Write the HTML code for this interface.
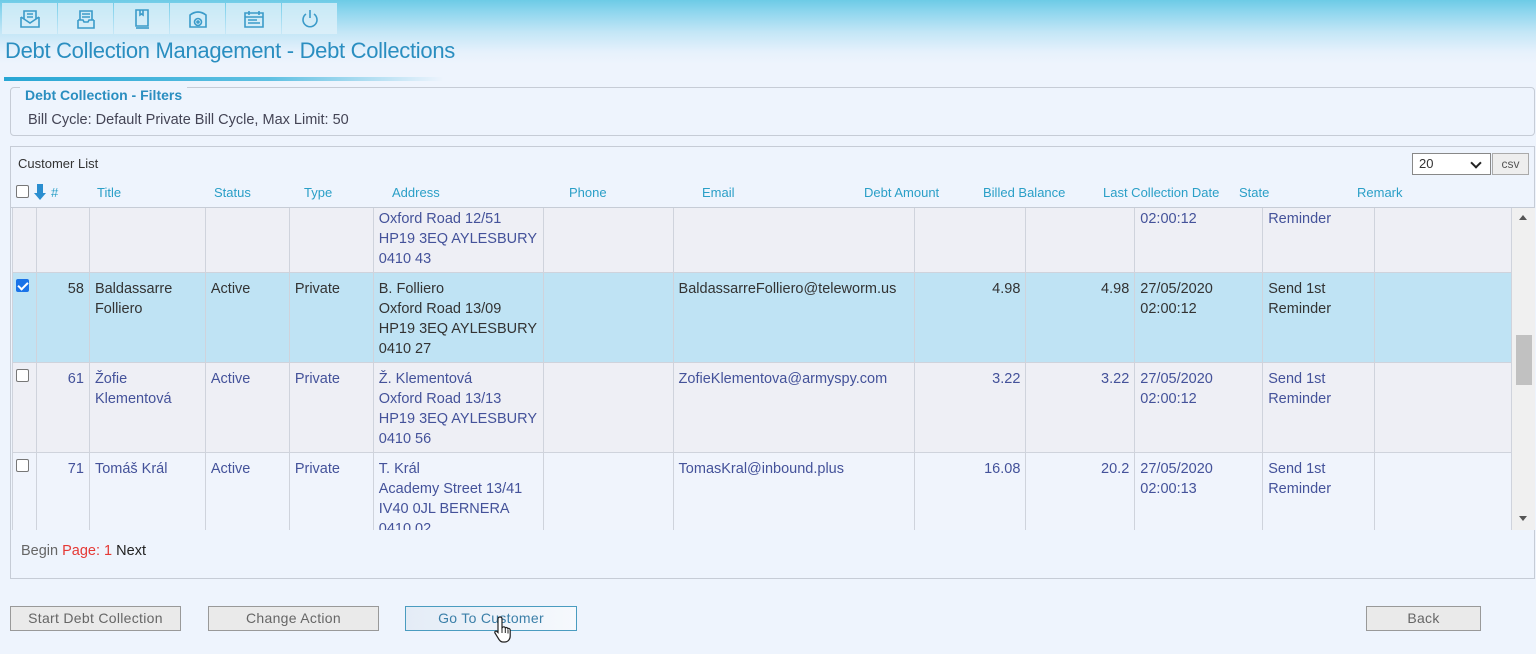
<!DOCTYPE html>
<html><head><meta charset="utf-8"><style>
*{box-sizing:border-box;margin:0;padding:0}
body{width:1536px;height:654px;overflow:hidden;background:#eef4fd;font-family:"Liberation Sans",sans-serif;position:relative;color:#333}
.top{position:absolute;left:0;top:0;width:1536px;height:66px;background:linear-gradient(#6dcbe6 0px,#8fd6ee 12px,#c3e6f6 32px,#e6f1fc 52px,#eef4fd 64px)}
.tile{position:absolute;top:3px;width:55px;height:31px;background:rgba(225,242,250,.75)}
.tile svg{position:absolute;left:17px;top:5px}
h1{position:absolute;left:5px;top:38px;font-size:22px;font-weight:normal;color:#2a8ec0;letter-spacing:-.3px}
.uline{position:absolute;left:4px;top:77px;width:440px;height:4px;background:linear-gradient(90deg,#28a6d4,#5ec0e2 60%,rgba(238,244,253,0))}
fieldset{position:absolute;left:10px;top:87px;width:1525px;height:49px;border:1px solid #c6ccd6;border-radius:4px}
.lg{position:absolute;left:20px;top:87px;background:#eef4fd;padding:0 5px;font-size:14px;font-weight:bold;color:#2a8ec0}
.bc{position:absolute;left:28px;top:112px;font-size:14.5px;color:#445}
.list{position:absolute;left:10px;top:146px;width:1525px;height:433px;border:1px solid #c6ccd6}
.cl{position:absolute;left:18px;top:156px;font-size:13px;color:#333}
.sel{position:absolute;left:1412px;top:153px;width:79px;height:22px;border:1px solid #888;background:#fff;font-size:13px;padding:2px 6px}
.sel:after{content:"";position:absolute;right:10px;top:5px;width:6px;height:6px;border-right:2px solid #222;border-bottom:2px solid #222;transform:rotate(45deg)}
.csv{position:absolute;left:1492px;top:153px;width:37px;height:22px;border:1px solid #aaa;background:#eee;font-size:12px;color:#555;text-align:center;line-height:20px}
.hd{position:absolute;top:185px;font-size:13px;color:#2a9fc7}
.hline{position:absolute;left:11px;top:207px;width:1523px;height:1px;background:#c6ccd6}
.body{position:absolute;left:12px;top:208px;width:1500px;height:322px;overflow:hidden}
table{border-collapse:collapse;table-layout:fixed;margin-top:-26px;font-size:14.5px}
td{border:1px solid #cfd3dc;vertical-align:top;padding:6px 5px 0 5px;line-height:20px;height:90px;color:#44529a;overflow:hidden;white-space:nowrap}
tr.g td{background:#eeeff5}
tr.l td{background:#f0f4fc}
tr.s td{background:#bfe3f4;color:#333}
td.r{text-align:right}
.cb{width:13px;height:13px;border:1px solid #777;border-radius:2px;background:#fff;margin:0 0 0 -1px}
.cb.on{background:#1a73e8;border-color:#1a73e8;position:relative}
.cb.on:after{content:"";position:absolute;left:3px;top:0px;width:4px;height:8px;border-right:2px solid #fff;border-bottom:2px solid #fff;transform:rotate(45deg)}
.sb{position:absolute;left:1512px;top:208px;width:23px;height:322px;background:#f0f0f0}
.thumb{position:absolute;left:1516px;top:335px;width:16px;height:50px;background:#c1c1c1}
.pg{position:absolute;left:21px;top:543px;font-size:14.5px;color:#666}
.btn{position:absolute;top:606px;height:25px;border:1px solid #999;background:#eaeaea;font-size:14px;color:#666;text-align:center;line-height:23px;letter-spacing:.3px}
</style></head><body>
<div class="top"></div>
<div class="tile" style="left:2px"><svg width="22" height="22" viewBox="0 0 22 22" fill="none" stroke="#3b9bc9" stroke-width="1.6"><path d="M2 9v10h18V9"/><path d="M2 9l9 6 9-6"/><path d="M5 11V3h12v8"/><path d="M8 6h6M8 9h6"/></svg></div>
<div class="tile" style="left:58px"><svg width="22" height="22" viewBox="0 0 22 22" fill="none" stroke="#3b9bc9" stroke-width="1.6"><path d="M3 12v8h16v-8"/><path d="M3 12h5l1 2h4l1-2h5"/><path d="M5 12V3h12v9"/><path d="M7 6h8M7 9h8"/></svg></div>
<div class="tile" style="left:114px"><svg width="22" height="22" viewBox="0 0 22 22" fill="none" stroke="#3b9bc9" stroke-width="1.6"><path d="M5 2h12v16H5z"/><path d="M5 20h13"/><path d="M9 2v5l1.5-1 1.5 1V2"/></svg></div>
<div class="tile" style="left:170px"><svg width="22" height="22" viewBox="0 0 22 22" fill="none" stroke="#3b9bc9" stroke-width="1.6"><path d="M3 7q8-6 16 0v12H3z"/><circle cx="11" cy="14" r="3.5"/><circle cx="11" cy="14" r="1"/></svg></div>
<div class="tile" style="left:226px"><svg width="22" height="22" viewBox="0 0 22 22" fill="none" stroke="#3b9bc9" stroke-width="1.6"><path d="M2 5h18v14H2z"/><path d="M2 9h18"/><path d="M6 3v4M16 3v4"/><path d="M5 12h9M5 15h12"/></svg></div>
<div class="tile" style="left:282px"><svg width="22" height="22" viewBox="0 0 22 22" fill="none" stroke="#3b9bc9" stroke-width="1.6"><path d="M7 6a7 7 0 1 0 8 0"/><path d="M11 2v8"/></svg></div>
<h1>Debt Collection Management - Debt Collections</h1>
<div class="uline"></div>
<fieldset></fieldset>
<div class="lg">Debt Collection - Filters</div>
<div class="bc">Bill Cycle: Default Private Bill Cycle, Max Limit: 50</div>
<div class="list"></div>
<div class="cl">Customer List</div>
<div class="sel">20</div><div class="csv">csv</div>
<div class="cb" style="position:absolute;left:17px;top:185px"></div>
<svg style="position:absolute;left:33px;top:183px" width="14" height="18" viewBox="0 0 14 18"><path d="M4 1h6v9h3l-6 7-6-7h3z" fill="#2a8ed0"/></svg>
<div class="hd" style="left:51px">#</div>
<div class="hd" style="left:97px">Title</div>
<div class="hd" style="left:214px">Status</div>
<div class="hd" style="left:304px">Type</div>
<div class="hd" style="left:392px">Address</div>
<div class="hd" style="left:569px">Phone</div>
<div class="hd" style="left:702px">Email</div>
<div class="hd" style="left:864px">Debt Amount</div>
<div class="hd" style="left:983px">Billed Balance</div>
<div class="hd" style="left:1103px">Last Collection Date</div>
<div class="hd" style="left:1239px">State</div>
<div class="hd" style="left:1357px">Remark</div>
<div class="hline"></div>
<div class="body"><table>
<colgroup><col style="width:24px"><col style="width:53px"><col style="width:116px"><col style="width:84px"><col style="width:84px"><col style="width:170px"><col style="width:130px"><col style="width:241px"><col style="width:112px"><col style="width:109px"><col style="width:128px"><col style="width:112px"><col style="width:137px"></colgroup>
<tr class="g"><td></td><td></td><td></td><td></td><td></td><td>X. Xxxxx<br>Oxford Road 12/51<br>HP19 3EQ AYLESBURY<br>0410 43</td><td></td><td></td><td></td><td></td><td>27/05/2020<br>02:00:12</td><td>Send 1st<br>Reminder</td><td></td></tr>
<tr class="s"><td style="padding-left:4px"><div class="cb on"></div></td><td class="r">58</td><td>Baldassarre<br>Folliero</td><td>Active</td><td>Private</td><td>B. Folliero<br>Oxford Road 13/09<br>HP19 3EQ AYLESBURY<br>0410 27</td><td></td><td>BaldassarreFolliero@teleworm.us</td><td class="r">4.98</td><td class="r">4.98</td><td>27/05/2020<br>02:00:12</td><td>Send 1st<br>Reminder</td><td></td></tr>
<tr class="g"><td style="padding-left:4px"><div class="cb"></div></td><td class="r">61</td><td>Žofie<br>Klementová</td><td>Active</td><td>Private</td><td>Ž. Klementová<br>Oxford Road 13/13<br>HP19 3EQ AYLESBURY<br>0410 56</td><td></td><td>ZofieKlementova@armyspy.com</td><td class="r">3.22</td><td class="r">3.22</td><td>27/05/2020<br>02:00:12</td><td>Send 1st<br>Reminder</td><td></td></tr>
<tr class="l"><td style="padding-left:4px"><div class="cb"></div></td><td class="r">71</td><td>Tomáš Král</td><td>Active</td><td>Private</td><td>T. Král<br>Academy Street 13/41<br>IV40 0JL BERNERA<br>0410 02</td><td></td><td>TomasKral@inbound.plus</td><td class="r">16.08</td><td class="r">20.2</td><td>27/05/2020<br>02:00:13</td><td>Send 1st<br>Reminder</td><td></td></tr>
</table></div>
<div class="sb"></div>
<div style="position:absolute;left:1519px;top:215px;border:4px solid transparent;border-bottom:5px solid #555;border-top:0"></div>
<div style="position:absolute;left:1519px;top:516px;border:4px solid transparent;border-top:5px solid #555;border-bottom:0"></div>
<div class="thumb"></div>
<div class="pg">Begin <span style="color:#e53935">Page: 1</span> <span style="color:#222">Next</span></div>
<div class="btn" style="left:10px;width:171px">Start Debt Collection</div>
<div class="btn" style="left:208px;width:171px">Change Action</div>
<div class="btn" style="left:405px;width:172px;border-color:#4a9cc0;background:linear-gradient(90deg,#e4ecf6,#f6f9fd);color:#3b7fa8">Go To Customer</div>
<div class="btn" style="left:1366px;width:115px">Back</div>
<svg style="position:absolute;left:493px;top:615px" width="24" height="30" viewBox="0 0 24 30"><path d="M7 2c1.2 0 2 .8 2 2v9l1-1c1-.5 2 0 2.3.8 1-.6 2.200-.2 2.5.8 1.100-.5 2.300.1 2.400 1.3V21c0 3-2 6-5.500 6H10c-2 0-3-1-4-2.500L2 18c-.6-1 .3-2.300 1.500-1.800L5 17.500V4c0-1.200.8-2 2-2z" fill="#fff" stroke="#222" stroke-width="1.2"/><path d="M9 13v5M12.3 13v5M15 14.5v4" stroke="#222" stroke-width="1"/></svg>
</body></html>
